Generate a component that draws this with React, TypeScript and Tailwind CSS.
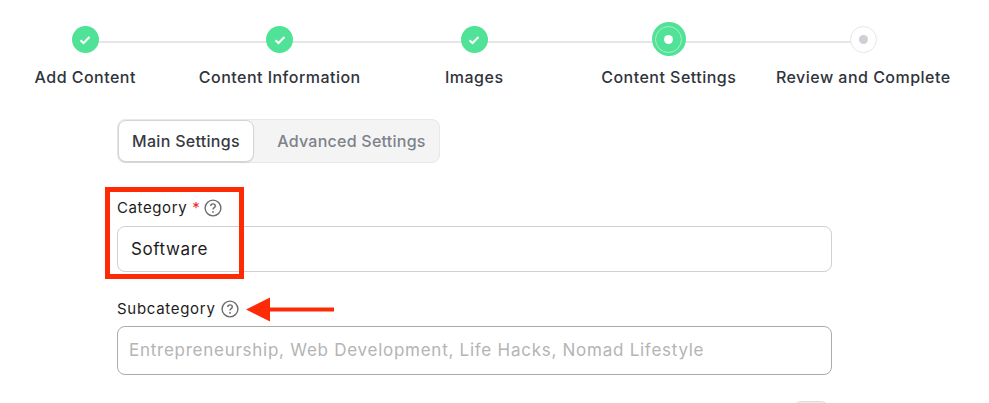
import React from 'react';

const STEPS = [
  { label: 'Add Content', state: 'done' },
  { label: 'Content Information', state: 'done' },
  { label: 'Images', state: 'done' },
  { label: 'Content Settings', state: 'active' },
  { label: 'Review and Complete', state: 'todo' },
];

const StepDot: React.FC<{ state: string }> = ({ state }) => {
  if (state === 'done') {
    return (
      <div className="w-[27px] h-[27px] rounded-full bg-[#50e296] flex items-center justify-center">
        <svg width="12" height="10" viewBox="0 0 12 10" fill="none">
          <path d="M1.5 5.2 4.5 8 10.5 2" stroke="#fff" strokeWidth="2" />
        </svg>
      </div>
    );
  }
  if (state === 'active') {
    return (
      <div className="w-[34px] h-[34px] -mt-[4px] rounded-full bg-[#50e296] flex items-center justify-center">
        <div className="w-[27px] h-[27px] rounded-full border border-[#a8f0ca] flex items-center justify-center">
          <div className="w-[9px] h-[9px] rounded-full bg-white" />
        </div>
      </div>
    );
  }
  return (
    <div className="w-[27px] h-[27px] rounded-full bg-white border border-[#e5e6e8] flex items-center justify-center">
      <div className="w-[9px] h-[9px] rounded-full bg-[#cfd0d6]" />
    </div>
  );
};

const HelpIcon = () => (
  <svg width="18" height="18" viewBox="0 0 18 18" fill="none" className="shrink-0">
    <circle cx="9" cy="9" r="7.9" stroke="#6b6b6b" strokeWidth="1.4" />
    <path d="M6.7 7.1c0-1.3 1-2.2 2.3-2.2s2.3.9 2.3 2c0 1.7-2.3 1.8-2.3 3.5" stroke="#6b6b6b" strokeWidth="1.4" />
    <circle cx="9" cy="12.9" r=".9" fill="#6b6b6b" />
  </svg>
);

export default function App() {
  return (
    <div
      className="relative w-[989px] h-[403px] overflow-hidden bg-white"
      style={{ fontFamily: '"Inter", "Liberation Sans", sans-serif' }}
    >
      {/* Stepper */}
      <div className="relative flex -ml-3 w-[972.5px] pt-[26px]">
        <div className="absolute left-[97px] w-[778px] top-[41px] h-[2px] bg-[#e6e6e6]" />
        {STEPS.map((step) => (
          <div key={step.label} className="relative flex-1 flex flex-col items-center">
            <div className="h-[27px] flex justify-center">
              <StepDot state={step.state} />
            </div>
            <p className="mt-[15px] text-[16px] leading-[18px] tracking-[0.48px] font-medium text-[#30343b] whitespace-nowrap">
              {step.label}
            </p>
          </div>
        ))}
      </div>

      <div className="ml-[117px] w-[715px]">
        {/* Tabs */}
        <div className="mt-[33px] w-[323px] h-[44px] flex rounded-lg border border-[#e8e8e8] bg-[#f4f4f4]">
          <div className="w-[136px] pb-px rounded-lg bg-white border border-[#d4d4d6] shadow-[0_1px_1px_rgba(0,0,0,0.08)] flex items-center justify-center text-[16px] tracking-[0.3px] font-medium text-[#363a43]">
            Main Settings
          </div>
          <div className="flex-1 pb-px flex items-center justify-center pl-[10px] text-[16px] tracking-[0.25px] font-medium text-[#7d828b]">
            Advanced Settings
          </div>
        </div>

        {/* Category */}
        <div className="mt-[35px] h-[20px] flex items-center text-[15px] tracking-[0.6px] text-[#1c1c1c]">
          <span className="pt-px">Category</span>
          <span className="ml-[5px] pt-px text-[#f5222d]">*</span>
          <span className="ml-[4px]"><HelpIcon /></span>
        </div>
        <div className="mt-[8px] h-[46px] pt-px flex items-center px-[13px] rounded-lg border border-[#d0d0d0] text-[17px] tracking-[0.6px] text-[#1c1c1c]">
          Software
        </div>

        {/* Subcategory */}
        <div className="mt-[27px] h-[20px] flex items-center gap-[5px] text-[15px] tracking-[0.7px] text-[#1c1c1c]">
          <span className="pt-px">Subcategory</span>
          <HelpIcon />
        </div>
        <div className="mt-[7px] h-[49px] pt-px flex items-center px-[11px] rounded-lg border border-[#ababab] text-[17px] tracking-[0.74px] text-[#b4b4b4] whitespace-nowrap">
          Entrepreneurship, Web Development, Life Hacks, Nomad Lifestyle
        </div>
      </div>

      {/* Toggle cut off by the bottom edge */}
      <div className="absolute left-[793px] top-[401px] w-[36px] h-[20px] rounded-lg bg-[#efefef] border border-[#dcdcdc]" />

      {/* Annotations */}
      <div className="absolute left-[105px] top-[187px] w-[139px] h-[92px] border-[5px] border-[#fe2a06]" />
      <svg className="absolute left-[244px] top-[295px]" width="92" height="30" viewBox="0 0 92 30">
        <path d="M2 14.5 26 2.5v10h64v4H26v10z" fill="#fe2a06" />
      </svg>
    </div>
  );
}
